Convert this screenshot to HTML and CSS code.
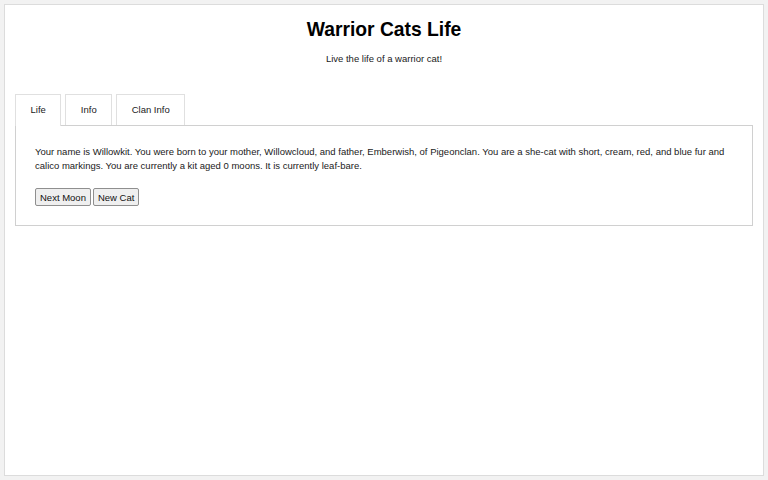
FILE: index.html
```html
<!DOCTYPE html>
<html>
<head>
<meta charset="utf-8">
<link rel="stylesheet" href="styles.css">
</head>
<body>
<div class="page">
  <h1 class="title">Warrior Cats Life</h1>
  <p class="subtitle">Live the life of a warrior cat!</p>
  <div class="tabs">
    <div class="tab active">Life</div>
    <div class="tab">Info</div>
    <div class="tab">Clan Info</div>
  </div>
  <div class="panel">
    <p class="story">Your name is Willowkit. You were born to your mother, Willowcloud, and father, Emberwish, of Pigeonclan. You are a she-cat with short, cream, red, and blue fur and calico markings. You are currently a kit aged 0 moons. It is currently leaf-bare.</p>
    <div class="buttons">
      <button class="btn">Next Moon</button>
      <button class="btn">New Cat</button>
    </div>
  </div>
</div>
</body>
</html>
```

FILE: styles.css
```css
html, body {
  margin: 0;
  padding: 0;
  background: #f2f2f2;
  font-family: "Liberation Sans", Arial, sans-serif;
  color: #1a1a1a;
}
body {
  padding: 4px;
  height: 480px;
  box-sizing: border-box;
}
.page {
  background: #fff;
  border: 1px solid #dcdcdc;
  height: 100%;
  box-sizing: border-box;
  padding: 0 10px;
}
.title {
  margin: 13px 0 0;
  font-size: 19.3px;
  line-height: 24px;
  text-align: center;
  font-weight: bold;
  color: #000;
}
.subtitle {
  margin: 11px 0 0;
  font-size: 9.5px;
  line-height: 12px;
  text-align: center;
}
.tabs {
  display: flex;
  align-items: flex-start;
  gap: 4px;
  margin-top: 29px;
  height: 31px;
  position: relative;
  z-index: 1;
}
.tab {
  border: 1px solid #e0e0e0;
  border-bottom: none;
  padding: 0 14.5px;
  height: 31px;
  line-height: 30px;
  font-size: 9.5px;
  background: #fff;
  box-sizing: border-box;
}
.tab.active {
  height: 32px;
}
.panel {
  border: 1px solid #d0d0d0;
  padding: 19px 19px 19px;
}
.story {
  margin: 0;
  font-size: 9.5px;
  line-height: 14px;
}
.buttons {
  margin-top: 15px;
  display: flex;
  gap: 2px;
}
.btn {
  font-family: "Liberation Sans", Arial, sans-serif;
  font-size: 9.5px;
  height: 18px;
  padding: 0 4px;
  border: 1px solid #8f8f8f;
  border-radius: 2px;
  background: #efefef;
  color: #111;
}
```
